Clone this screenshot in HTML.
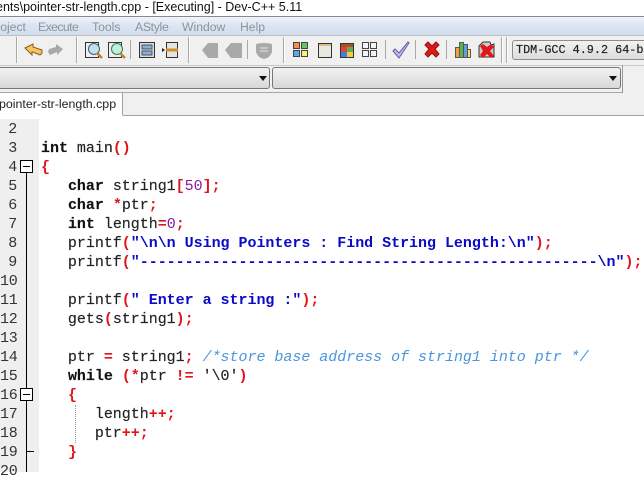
<!DOCTYPE html>
<html><head><meta charset="utf-8"><style>
html,body{margin:0;padding:0}
body{width:644px;height:472px;overflow:hidden;background:#fff;position:relative;font-family:"Liberation Sans",sans-serif}
.a{position:absolute}
.m{position:absolute;top:19px;font-size:12.2px;color:#8d929b;line-height:16px}
.sep{position:absolute;top:37px;width:1px;height:26px;background:#a8a8a8;box-shadow:1px 0 0 #fff}
.s{position:absolute;top:40px;width:1px;height:19px;background:#a8a8a8}
.l{position:absolute;left:41px;height:19px;font:15px/19px "Liberation Mono",monospace;letter-spacing:-.025px;white-space:pre;color:#222;-webkit-text-stroke:.15px #222}
.n{position:absolute;left:0;width:17px;text-align:right;font:15px/19px "Liberation Mono",monospace;color:#333;letter-spacing:-.3px}
b{font-weight:bold;color:#111}
.r{color:#e0141a;font-weight:bold;-webkit-text-stroke:0}
.s2{color:#0a0ac8;font-weight:bold;-webkit-text-stroke:0}
.p{color:#8a1a9a;-webkit-text-stroke:0}
.c{color:#4a96dc;font-style:italic;-webkit-text-stroke:0}
.fold{position:absolute;left:20px;width:11px;height:11px;border:1px solid #000;background:#fff}
.fold:after{content:"";position:absolute;left:2px;top:5px;width:7px;height:1px;background:#000}
</style></head><body>
<div class="a" style="left:0;top:0;width:644px;height:16px;background:#fff"></div>
<div class="a" style="left:-4px;top:-2px;font-size:12.5px;line-height:19px;color:#111;white-space:pre">ents\pointer-str-length.cpp - [Executing] - Dev-C++ 5.11</div>
<div class="a" style="left:0;top:16px;width:644px;height:20px;background:linear-gradient(#888 0,#888 1px,#f0f4fc 1px,#dbe4f2 50%,#d2dcec)"></div>
<div class="a" style="left:0;top:35px;width:644px;height:1px;background:#b9bfc9"></div>
<div class="m" style="left:-12px">Project</div>
<div class="m" style="left:38px;letter-spacing:-.55px">Execute</div>
<div class="m" style="left:92px">Tools</div>
<div class="m" style="left:135px;letter-spacing:-.3px">AStyle</div>
<div class="m" style="left:182px">Window</div>
<div class="m" style="left:240px">Help</div>

<div class="a" style="left:0;top:36px;width:644px;height:29px;background:#f0f0f0"></div>
<div class="sep" style="left:16px"></div><div class="sep" style="left:76px"></div><div class="sep" style="left:188px"></div><div class="sep" style="left:283px"></div><div class="sep" style="left:501px"></div><div class="sep" style="left:506px"></div>
<div class="s" style="left:130px"></div><div class="s" style="left:247px"></div><div class="s" style="left:385px"></div><div class="s" style="left:415px"></div><div class="s" style="left:446px"></div>

<svg class="a" style="left:0;top:36px" width="644" height="29" viewBox="0 36 644 29">
<path d="M25 48l8-4v3l9 3v3l-2 2-7-3h-1v3z" fill="#f4c860" stroke="#8a5a14"/>
<path d="M63 49l-7-5v3l-7 2-1 3 2 3 7-3v3z" fill="#a8a8a8"/>
<rect x="85.500" y="42.500" width="13" height="15" fill="#eee" stroke="#333"/>
<circle cx="94" cy="49" r="5.500" fill="#bfe0f0" stroke="#40606a"/><path d="M97 53l5 5" stroke="#c08030" stroke-width="2.500"/>
<rect x="108.500" y="42.500" width="13" height="15" fill="#eee" stroke="#333"/>
<circle cx="117" cy="49" r="5.500" fill="#bff0d8" stroke="#40706a"/><path d="M120 53l5 5" stroke="#c08030" stroke-width="2.500"/>
<rect x="139.500" y="42.500" width="15" height="15" fill="#ddd" stroke="#333"/>
<rect x="142" y="45" width="10" height="4" fill="#8ab0d8" stroke="#456"/><rect x="142" y="51" width="10" height="4" fill="#8ab0d8" stroke="#456"/>
<rect x="166.500" y="42.500" width="11" height="15" fill="#e4e4e4" stroke="#333"/><rect x="166" y="48.500" width="12" height="3" fill="#d09020"/><path d="M162 48l3 2-3 2z" fill="#222"/>
<path d="M202 50l6-7h10v15h-10z" fill="#a9a9a9"/>
<path d="M225 50l6-7h11v15h-11z" fill="#a9a9a9"/>
<path d="M256 44q8-2 16 0v8q-2 6-8 7-6-1-8-7z" fill="#a9a9a9"/><path d="M260 48h8M260 51h8" stroke="#e8e8e8"/>
<g stroke="#444" stroke-width="1"><rect x="293.500" y="42.500" width="6" height="6" fill="#f09050"/><rect x="301.500" y="42.500" width="6" height="6" fill="#70c060"/><rect x="293.500" y="50.500" width="6" height="6" fill="#60a8e8"/><rect x="301.500" y="50.500" width="6" height="6" fill="#f8f070"/></g>
<rect x="318.500" y="43.500" width="13" height="14" fill="#e8e8e0" stroke="#333"/><rect x="319" y="44" width="12" height="2" fill="#d8c080"/>
<rect x="340.500" y="43.500" width="13" height="14" fill="#ddd" stroke="#333"/><rect x="341" y="44" width="12" height="3" fill="#b05020"/><rect x="341" y="47" width="6" height="5" fill="#e04040"/><rect x="347" y="47" width="6" height="5" fill="#60b050"/><rect x="341" y="52" width="6" height="5" fill="#4080e0"/><rect x="347" y="52" width="6" height="5" fill="#f0d040"/>
<g fill="#f4f4f4" stroke="#444"><rect x="362.500" y="42.500" width="6" height="6"/><rect x="370.500" y="42.500" width="6" height="6"/><rect x="362.500" y="50.500" width="6" height="6"/><rect x="370.500" y="50.500" width="6" height="6"/></g>
<path d="M393 51l2-2 4 4 9-11 1 1-10 15z" fill="#c8b8f0" stroke="#6a5aa8"/>
<path d="M425 45l3-3 4 4 4-4 3 3-4 4 4 5-3 3-4-4-4 4-3-3 4-5z" fill="#e01818" stroke="#901010"/>
<rect x="455.500" y="47.500" width="4" height="10" fill="#f0a040" stroke="#654"/><rect x="459.500" y="42.500" width="4" height="15" fill="#60b050" stroke="#465"/><rect x="463.500" y="44.500" width="4" height="13" fill="#60a0e0" stroke="#456"/><rect x="467.500" y="49.500" width="3" height="8" fill="#f0e060" stroke="#654"/>
<path d="M479 46l4-4h7l1 3 3-1v13h-15z" fill="#ccc" stroke="#333"/><path d="M480 46l3-2 4 3 4-3 3 3-4 4 4 5-3 2-4-4-4 4-3-3 3-4z" fill="#e01818"/>
</svg>
<div class="a" style="left:512px;top:40px;width:150px;height:20px;box-sizing:border-box;border:1px solid #8c8c8c;border-radius:3px;background:linear-gradient(#f2f2f2,#dcdcdc);font:11.8px/19px 'Liberation Mono',monospace;color:#222;padding-left:3px;white-space:pre;-webkit-text-stroke:.2px #222">TDM-GCC 4.9.2 64-bit</div>

<div class="a" style="left:0;top:65px;width:644px;height:28px;background:#f0f0f0;border-top:1px solid #c8c8c8;box-sizing:border-box"></div>
<div class="a" style="left:-6px;top:67px;width:276px;height:22px;box-sizing:border-box;border:1px solid #777;border-radius:3px;background:linear-gradient(#f2f2f2,#d8d8d8)"></div>
<div class="a" style="left:272px;top:67px;width:349px;height:22px;box-sizing:border-box;border:1px solid #777;border-radius:3px;background:linear-gradient(#f2f2f2,#d8d8d8)"></div>
<div class="a" style="left:622px;top:65px;width:1px;height:28px;background:#999"></div>
<div class="a" style="left:0;top:92px;width:622px;height:1px;background:#a8a8a8"></div>
<svg class="a" style="left:0;top:74px" width="644" height="10"><path d="M259 2h8l-4 5z M609 2h8l-4 5z" fill="#111"/></svg>

<div class="a" style="left:0;top:93px;width:644px;height:23px;background:#f0f0f0"></div>
<div class="a" style="left:0;top:115px;width:644px;height:1px;background:#a0a0a0"></div>
<div class="a" style="left:0;top:93px;width:123px;height:23px;box-sizing:border-box;background:#fff;border-right:1px solid #a0a0a0;border-bottom:1px solid #fff"></div>
<div class="a" style="left:-1px;top:94px;font-size:12.4px;line-height:21px;color:#222;white-space:pre">pointer-str-length.cpp</div>
<div class="a" style="left:0;top:116px;width:644px;height:356px;background:#fff"></div>
<div class="a" style="left:0;top:119px;width:39px;height:353px;background:#efefef"></div>
<div class="a" style="left:26px;top:172px;width:1px;height:300px;background:#000"></div>
<div class="fold" style="top:160px"></div>
<div class="fold" style="top:388px"></div>
<div class="a" style="left:26px;top:451px;width:8px;height:1px;background:#000"></div>
<div class="a" style="left:75px;top:405px;width:0;height:38px;border-left:1px dotted #999"></div>

<div class="n" style="top:120px">2</div><div class="n" style="top:139px">3</div><div class="n" style="top:158px">4</div><div class="n" style="top:177px">5</div><div class="n" style="top:196px">6</div><div class="n" style="top:215px">7</div><div class="n" style="top:234px">8</div><div class="n" style="top:253px">9</div><div class="n" style="top:272px">10</div><div class="n" style="top:291px">11</div><div class="n" style="top:310px">12</div><div class="n" style="top:329px">13</div><div class="n" style="top:348px">14</div><div class="n" style="top:367px">15</div><div class="n" style="top:386px">16</div><div class="n" style="top:405px">17</div><div class="n" style="top:424px">18</div><div class="n" style="top:443px">19</div><div class="n" style="top:462px">20</div>

<div class="l" style="top:139px"><b>int</b> main<span class="r">()</span></div>
<div class="l" style="top:158px"><span class="r">{</span></div>
<div class="l" style="top:177px">   <b>char</b> string1<span class="r">[</span><span class="p">50</span><span class="r">];</span></div>
<div class="l" style="top:196px">   <b>char</b> <span class="r">*</span>ptr<span class="r">;</span></div>
<div class="l" style="top:215px">   <b>int</b> length<span class="r">=</span><span class="p">0</span><span class="r">;</span></div>
<div class="l" style="top:234px">   printf<span class="r">(</span><span class="s2">"\n\n Using Pointers : Find String Length:\n"</span><span class="r">);</span></div>
<div class="l" style="top:253px">   printf<span class="r">(</span><span class="s2">"---------------------------------------------------\n"</span><span class="r">);</span></div>
<div class="l" style="top:291px">   printf<span class="r">(</span><span class="s2">" Enter a string :"</span><span class="r">);</span></div>
<div class="l" style="top:310px">   gets<span class="r">(</span>string1<span class="r">);</span></div>
<div class="l" style="top:348px">   ptr <span class="r">=</span> string1<span class="r">;</span> <span class="c">/*store base address of string1 into ptr */</span></div>
<div class="l" style="top:367px">   <b>while</b> <span class="r">(*</span>ptr <span class="r">!=</span> '\0'<span class="r">)</span></div>
<div class="l" style="top:386px">   <span class="r">{</span></div>
<div class="l" style="top:405px">      length<span class="r">++;</span></div>
<div class="l" style="top:424px">      ptr<span class="r">++;</span></div>
<div class="l" style="top:443px">   <span class="r">}</span></div>
</body></html>
